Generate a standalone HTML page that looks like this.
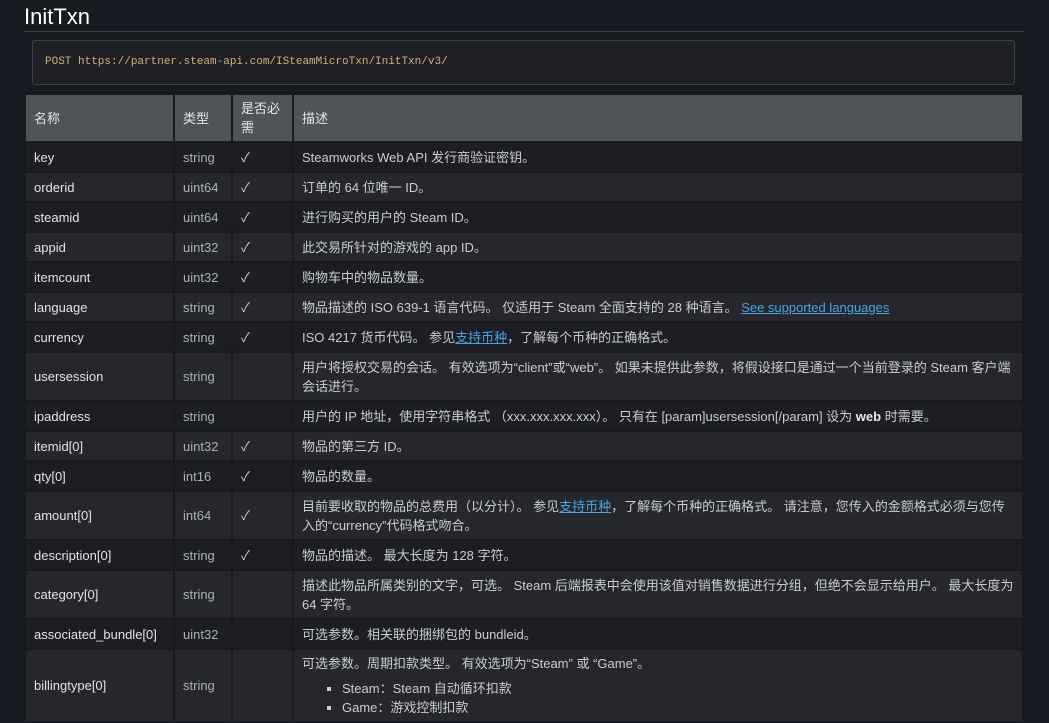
<!DOCTYPE html>
<html><head><meta charset="utf-8"><style>
body{margin:0;background:#171a21;color:#c9cdd3;font-family:"Liberation Sans","Noto Sans CJK SC",sans-serif;font-size:13px;width:1049px;height:696px;overflow:hidden}
h2{position:absolute;left:24px;top:2px;margin:0;font-weight:normal;font-size:22px;color:#fff;line-height:30px}
.hr{position:absolute;left:24px;top:31px;width:1000px;height:1px;background:#3a3d44}
.code{position:absolute;left:32px;top:40px;width:981px;height:43px;border:1px solid #3d4047;border-radius:3px;background:#1e2026;font-family:"Liberation Mono",monospace;font-size:11px;color:#d2b077;line-height:43px;box-sizing:content-box}
.code span{padding-left:12px}
table{position:absolute;left:24px;top:93px;width:1000px;border-spacing:2px;border-collapse:separate}
td,th{padding:4px 8px;line-height:19px;text-align:left;vertical-align:middle}
th{background:#505357;font-weight:normal;color:#e4e6e9;height:42px;padding:2px 8px}
tr:nth-child(odd) td{background:#1c1e24}
tr:nth-child(even) td{background:#25272c}
td{height:20px}
tr.two td{height:39px}
td:nth-child(1){width:131px;color:#e0e3e7}
td:nth-child(2){width:40px;color:#aab0b8}
td:nth-child(3){width:43px}
a{color:#4aa3df;text-decoration:underline}
b{font-weight:bold;color:#e8e8e8}
ul{margin:6px 0 0 0;padding-left:40px;list-style:square}
</style></head><body>
<h2>InitTxn</h2><div class="hr"></div>
<div class="code"><span>POST https://partner.steam-api.com/ISteamMicroTxn/InitTxn/v3/</span></div>
<table>
<thead><tr><th style="width:131px">名称</th><th style="width:40px">类型</th><th style="width:43px">是否必需</th><th>描述</th></tr></thead>
<tbody>
<tr><td>key</td><td>string</td><td>✓</td><td>Steamworks Web API 发行商验证密钥。</td></tr>
<tr><td>orderid</td><td>uint64</td><td>✓</td><td>订单的 64 位唯一 ID。</td></tr>
<tr><td>steamid</td><td>uint64</td><td>✓</td><td>进行购买的用户的 Steam ID。</td></tr>
<tr><td>appid</td><td>uint32</td><td>✓</td><td>此交易所针对的游戏的 app ID。</td></tr>
<tr><td>itemcount</td><td>uint32</td><td>✓</td><td>购物车中的物品数量。</td></tr>
<tr><td>language</td><td>string</td><td>✓</td><td>物品描述的 ISO 639-1 语言代码。 仅适用于 Steam 全面支持的 28 种语言。 <a>See supported languages</a></td></tr>
<tr><td>currency</td><td>string</td><td>✓</td><td>ISO 4217 货币代码。 参见<a>支持币种</a>，了解每个币种的正确格式。</td></tr>
<tr class="two"><td>usersession</td><td>string</td><td></td><td>用户将授权交易的会话。 有效选项为“client”或“web”。 如果未提供此参数，将假设接口是通过一个当前登录的 Steam 客户端会话进行。</td></tr>
<tr><td>ipaddress</td><td>string</td><td></td><td>用户的 IP 地址，使用字符串格式 （xxx.xxx.xxx.xxx）。 只有在 [param]usersession[/param] 设为 <b>web</b> 时需要。</td></tr>
<tr><td>itemid[0]</td><td>uint32</td><td>✓</td><td>物品的第三方 ID。</td></tr>
<tr><td>qty[0]</td><td>int16</td><td>✓</td><td>物品的数量。</td></tr>
<tr class="two"><td>amount[0]</td><td>int64</td><td>✓</td><td>目前要收取的物品的总费用（以分计）。 参见<a>支持币种</a>，了解每个币种的正确格式。 请注意，您传入的金额格式必须与您传入的“currency”代码格式吻合。</td></tr>
<tr><td>description[0]</td><td>string</td><td>✓</td><td>物品的描述。 最大长度为 128 字符。</td></tr>
<tr class="two"><td>category[0]</td><td>string</td><td></td><td>描述此物品所属类别的文字，可选。 Steam 后端报表中会使用该值对销售数据进行分组，但绝不会显示给用户。 最大长度为 64 字符。</td></tr>
<tr><td>associated_bundle[0]</td><td>uint32</td><td></td><td>可选参数。相关联的捆绑包的 bundleid。</td></tr>
<tr><td>billingtype[0]</td><td>string</td><td></td><td>可选参数。周期扣款类型。 有效选项为“Steam” 或 “Game”。<ul><li>Steam：Steam 自动循环扣款</li><li>Game：游戏控制扣款</li></ul></td></tr>
</tbody></table>
</body></html>
